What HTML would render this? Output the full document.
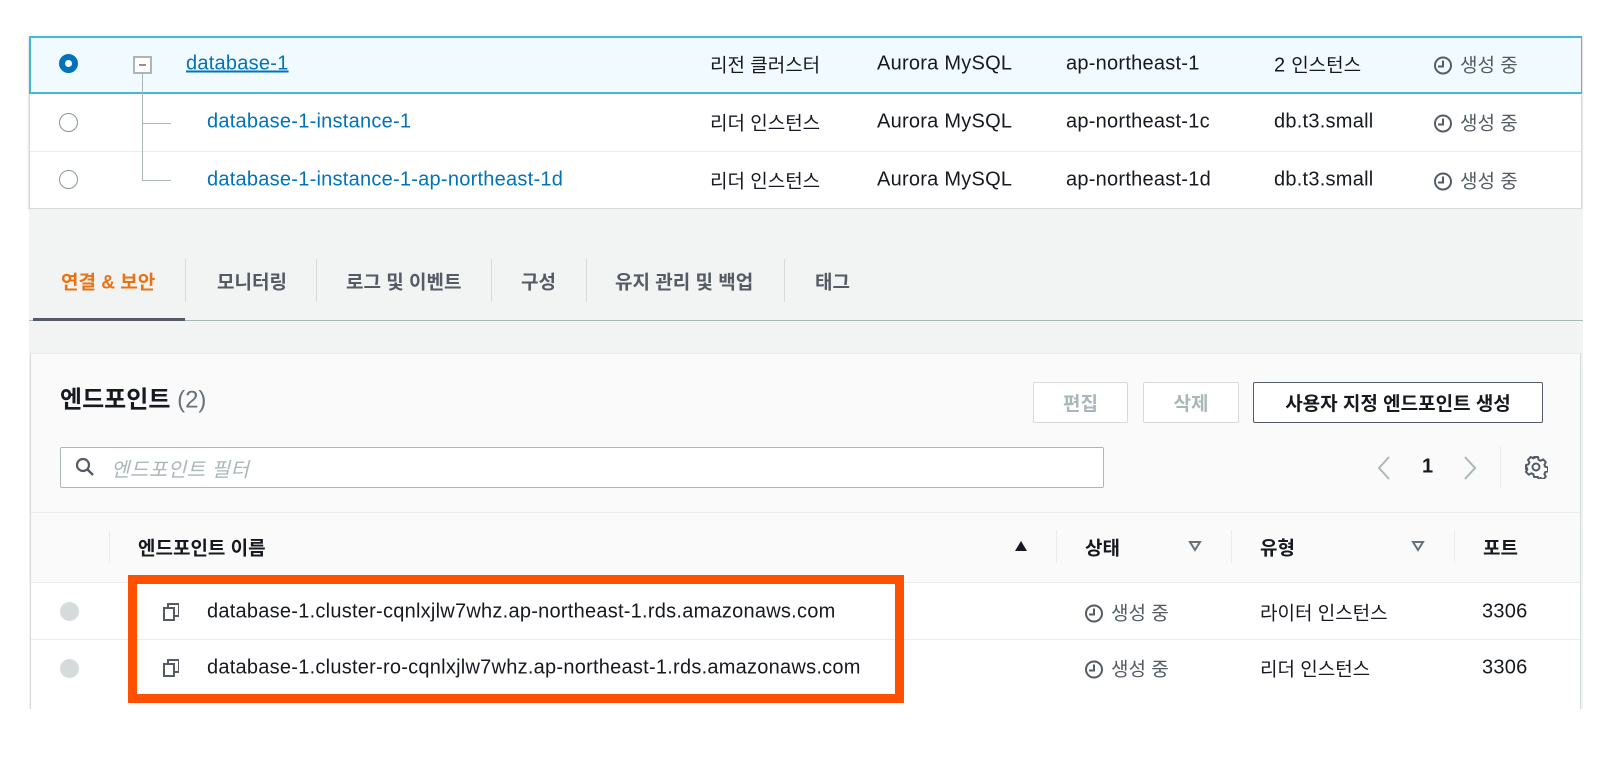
<!DOCTYPE html>
<html><head><meta charset="utf-8"><style>
*{margin:0;padding:0;box-sizing:border-box}
body{width:1608px;height:774px;background:#fff;position:relative;overflow:hidden;font-family:"Liberation Sans","Noto Sans CJK KR",sans-serif;color:#16191f;font-size:20px;letter-spacing:0.25px}
.a{position:absolute;white-space:nowrap}
.k{font-size:19px;letter-spacing:0}
.mid{transform:translateY(-50%)}
.link{color:#0073bb}
.clk{display:inline-block;width:18px;height:18px;border:2px solid #545b64;border-radius:50%;position:relative;vertical-align:-3px;margin-right:8px}
.clk:before{content:"";position:absolute;left:6px;top:2px;width:2px;height:6px;background:#545b64}
.clk:after{content:"";position:absolute;left:2px;top:7px;width:6px;height:2px;background:#545b64}
.gray{color:#545b64}
.sep{position:absolute;width:1px;background:#d5dbdb}
.btn{position:absolute;border:1px solid #d5dbdb;border-radius:2px;background:#fff;color:#aab7b8;font-weight:bold;font-size:19px;letter-spacing:0;display:flex;align-items:center;justify-content:center}
.copy{position:absolute;width:16px;height:18px}
</style></head><body>
<!-- top table -->
<div class="a" style="left:29px;top:36px;width:1553px;height:173px;background:#fff;border:1px solid #d5dbdb;box-shadow:0 1px 2px rgba(0,0,0,.25)"></div>
<div class="a" style="left:29px;top:36px;width:1553px;height:58px;background:#f1faff;border:1px solid #44b9d6;border-width:2px 1px 2px 2px;border-color:#44b9d6"></div>
<div class="a" style="left:30px;top:151px;width:1551px;height:1px;background:#eaeded"></div>
<div class="a" style="left:59px;top:54px;width:19px;height:19px;border-radius:50%;border:6px solid #0073bb;background:#fff"></div>
<div class="a" style="left:59px;top:113px;width:19px;height:19px;border-radius:50%;border:1.5px solid #879596;background:#fff"></div>
<div class="a" style="left:59px;top:170px;width:19px;height:19px;border-radius:50%;border:1.5px solid #879596;background:#fff"></div>
<div class="a" style="left:133px;top:56px;width:19px;height:18px;border:2px solid #aab7b8;background:#fff"><div style="position:absolute;left:4px;top:6px;width:7px;height:2px;background:#879596"></div></div>
<div class="a" style="left:142px;top:74px;width:1px;height:107px;background:#aab7b8"></div>
<div class="a" style="left:142px;top:123px;width:29px;height:1px;background:#aab7b8"></div>
<div class="a" style="left:142px;top:180px;width:29px;height:1px;background:#aab7b8"></div>
<div class="a mid link" style="left:186px;top:64px;text-decoration:underline">database-1</div>
<div class="a mid link" style="left:207px;top:122px">database-1-instance-1</div>
<div class="a mid link" style="left:207px;top:180px">database-1-instance-1-ap-northeast-1d</div>
<div class="a mid k" style="left:710px;top:64px">리전 클러스터</div>
<div class="a mid k" style="left:710px;top:122px">리더 인스턴스</div>
<div class="a mid k" style="left:710px;top:180px">리더 인스턴스</div>
<div class="a mid" style="left:877px;top:64px">Aurora MySQL</div>
<div class="a mid" style="left:877px;top:122px">Aurora MySQL</div>
<div class="a mid" style="left:877px;top:180px">Aurora MySQL</div>
<div class="a mid" style="left:1066px;top:64px">ap-northeast-1</div>
<div class="a mid" style="left:1066px;top:122px">ap-northeast-1c</div>
<div class="a mid" style="left:1066px;top:180px">ap-northeast-1d</div>
<div class="a mid" style="left:1274px;top:64px">2 <span class="k">인스턴스</span></div>
<div class="a mid" style="left:1274px;top:122px">db.t3.small</div>
<div class="a mid" style="left:1274px;top:180px">db.t3.small</div>
<div class="a mid gray k" style="left:1434px;top:64px"><span class="clk"></span>생성 중</div>
<div class="a mid gray k" style="left:1434px;top:122px"><span class="clk"></span>생성 중</div>
<div class="a mid gray k" style="left:1434px;top:180px"><span class="clk"></span>생성 중</div>
<!-- gray area -->
<div class="a" style="left:29px;top:209px;width:1554px;height:500px;background:#f2f3f3"></div>
<div class="a" style="left:29px;top:320px;width:1554px;height:1px;background:#aab7b8"></div>
<div class="a" style="left:33px;top:318px;width:152px;height:3px;background:#545b64"></div>
<div class="a mid k" style="left:61px;top:281px;color:#ec7211;font-weight:bold">연결 &amp; 보안</div>
<div class="a mid k" style="left:217px;top:281px;font-weight:bold;color:#545b64">모니터링</div>
<div class="a mid k" style="left:346px;top:281px;font-weight:bold;color:#545b64">로그 및 이벤트</div>
<div class="a mid k" style="left:521px;top:281px;font-weight:bold;color:#545b64">구성</div>
<div class="a mid k" style="left:615px;top:281px;font-weight:bold;color:#545b64">유지 관리 및 백업</div>
<div class="a mid k" style="left:815px;top:281px;font-weight:bold;color:#545b64">태그</div>
<div class="sep" style="left:185px;top:259px;height:43px"></div>
<div class="sep" style="left:316px;top:259px;height:43px"></div>
<div class="sep" style="left:491px;top:259px;height:43px"></div>
<div class="sep" style="left:586px;top:259px;height:43px"></div>
<div class="sep" style="left:784px;top:259px;height:43px"></div>
<!-- card -->
<div class="a" style="left:30px;top:353px;width:1551px;height:356px;background:#fafafa;border-left:1px solid #d5dbdb;border-right:1px solid #d5dbdb;border-top:1px solid #eaeded"></div>
<div class="a" style="left:31px;top:583px;width:1549px;height:126px;background:#fff"></div>
<div class="a mid" style="left:60px;top:397px;font-size:24px;font-weight:bold;letter-spacing:0">엔드포인트 <span style="font-weight:normal;color:#687078">(2)</span></div>
<div class="btn" style="left:1033px;top:382px;width:95px;height:41px">편집</div>
<div class="btn" style="left:1143px;top:382px;width:96px;height:41px">삭제</div>
<div class="btn" style="left:1253px;top:382px;width:290px;height:41px;border-color:#545b64;color:#16191f">사용자 지정 엔드포인트 생성</div>
<div class="a" style="left:60px;top:447px;width:1044px;height:41px;background:#fff;border:1px solid #aab7b8;border-radius:2px"></div>
<svg class="a" style="left:75px;top:457px" width="20" height="20" viewBox="0 0 20 20"><circle cx="8" cy="8" r="6" fill="none" stroke="#545b64" stroke-width="2.2"/><path d="M12.5 12.5L18 18" stroke="#545b64" stroke-width="2.4"/></svg>
<div class="a mid" style="left:111px;top:468px;color:#aab7b8;font-style:italic;font-size:20px;letter-spacing:0.5px">엔드포인트 필터</div>
<svg class="a" style="left:1376px;top:455px" width="16" height="26"><path d="M13 2L3 13l10 11" fill="none" stroke="#aab7b8" stroke-width="2"/></svg>
<div class="a mid" style="left:1422px;top:467px;font-weight:bold">1</div>
<svg class="a" style="left:1462px;top:455px" width="16" height="26"><path d="M3 2l10 11L3 24" fill="none" stroke="#aab7b8" stroke-width="2"/></svg>
<div class="sep" style="left:1500px;top:446px;height:42px;background:#eaeded"></div>
<svg class="a" style="left:1524px;top:455px" width="24" height="24" viewBox="0 0 24 24"><path d="M10 2h4l.6 2.8 2 1 2.6-1.4 2.6 2.8-1.4 2.6.9 2 2.7.6v4l-2.7.6-.9 2 1.4 2.6-2.6 2.8-2.6-1.4-2 .9L14 22h-4l-.6-2.8-2-.9-2.6 1.4-2.8-2.8 1.4-2.6-.9-2L2 14v-4l2.5-.6.9-2-1.4-2.6 2.8-2.8 2.6 1.4 2-1z" fill="none" stroke="#545b64" stroke-width="2" stroke-linejoin="round"/><circle cx="12" cy="12" r="3.5" fill="none" stroke="#545b64" stroke-width="2"/></svg>
<div class="a" style="left:31px;top:512px;width:1549px;height:1px;background:#eaeded"></div>
<div class="sep" style="left:109px;top:530px;height:33px;background:#eaeded"></div>
<div class="a mid k" style="left:138px;top:547px;font-weight:bold">엔드포인트 이름</div>
<svg class="a" style="left:1014px;top:540px" width="14" height="12"><path d="M7 1L13 11H1z" fill="#16191f"/></svg>
<div class="sep" style="left:1056px;top:530px;height:33px;background:#eaeded"></div>
<div class="a mid k" style="left:1085px;top:547px;font-weight:bold">상태</div>
<svg class="a" style="left:1188px;top:540px" width="14" height="12"><path d="M2 2h10L7 10z" fill="none" stroke="#687078" stroke-width="2"/></svg>
<div class="sep" style="left:1231px;top:530px;height:33px;background:#eaeded"></div>
<div class="a mid k" style="left:1260px;top:547px;font-weight:bold">유형</div>
<svg class="a" style="left:1411px;top:540px" width="14" height="12"><path d="M2 2h10L7 10z" fill="none" stroke="#687078" stroke-width="2"/></svg>
<div class="sep" style="left:1454px;top:530px;height:33px;background:#eaeded"></div>
<div class="a mid k" style="left:1483px;top:547px;font-weight:bold">포트</div>
<div class="a" style="left:31px;top:582px;width:1549px;height:1px;background:#eaeded"></div>
<div class="a" style="left:31px;top:639px;width:1549px;height:1px;background:#eaeded"></div>
<div class="a" style="left:60px;top:602px;width:19px;height:19px;border-radius:50%;background:#d5dbdb"></div>
<div class="a" style="left:60px;top:659px;width:19px;height:19px;border-radius:50%;background:#d5dbdb"></div>
<svg class="copy" style="left:163px;top:603px" width="18" height="18"><rect x="1" y="5" width="10" height="12" fill="none" stroke="#545b64" stroke-width="2"/><path d="M5 5V1h11v12h-5" fill="none" stroke="#545b64" stroke-width="2"/></svg>
<svg class="copy" style="left:163px;top:659px" width="18" height="18"><rect x="1" y="5" width="10" height="12" fill="none" stroke="#545b64" stroke-width="2"/><path d="M5 5V1h11v12h-5" fill="none" stroke="#545b64" stroke-width="2"/></svg>
<div class="a mid" style="left:207px;top:612px">database-1.cluster-cqnlxjlw7whz.ap-northeast-1.rds.amazonaws.com</div>
<div class="a mid" style="left:207px;top:668px">database-1.cluster-ro-cqnlxjlw7whz.ap-northeast-1.rds.amazonaws.com</div>
<div class="a mid gray k" style="left:1085px;top:612px"><span class="clk"></span>생성 중</div>
<div class="a mid gray k" style="left:1085px;top:668px"><span class="clk"></span>생성 중</div>
<div class="a mid k" style="left:1260px;top:612px">라이터 인스턴스</div>
<div class="a mid k" style="left:1260px;top:668px">리더 인스턴스</div>
<div class="a mid" style="left:1482px;top:612px">3306</div>
<div class="a mid" style="left:1482px;top:668px">3306</div>
<div class="a" style="left:128px;top:575px;width:776px;height:128px;border:9px solid #ff4f00"></div>
</body></html>
